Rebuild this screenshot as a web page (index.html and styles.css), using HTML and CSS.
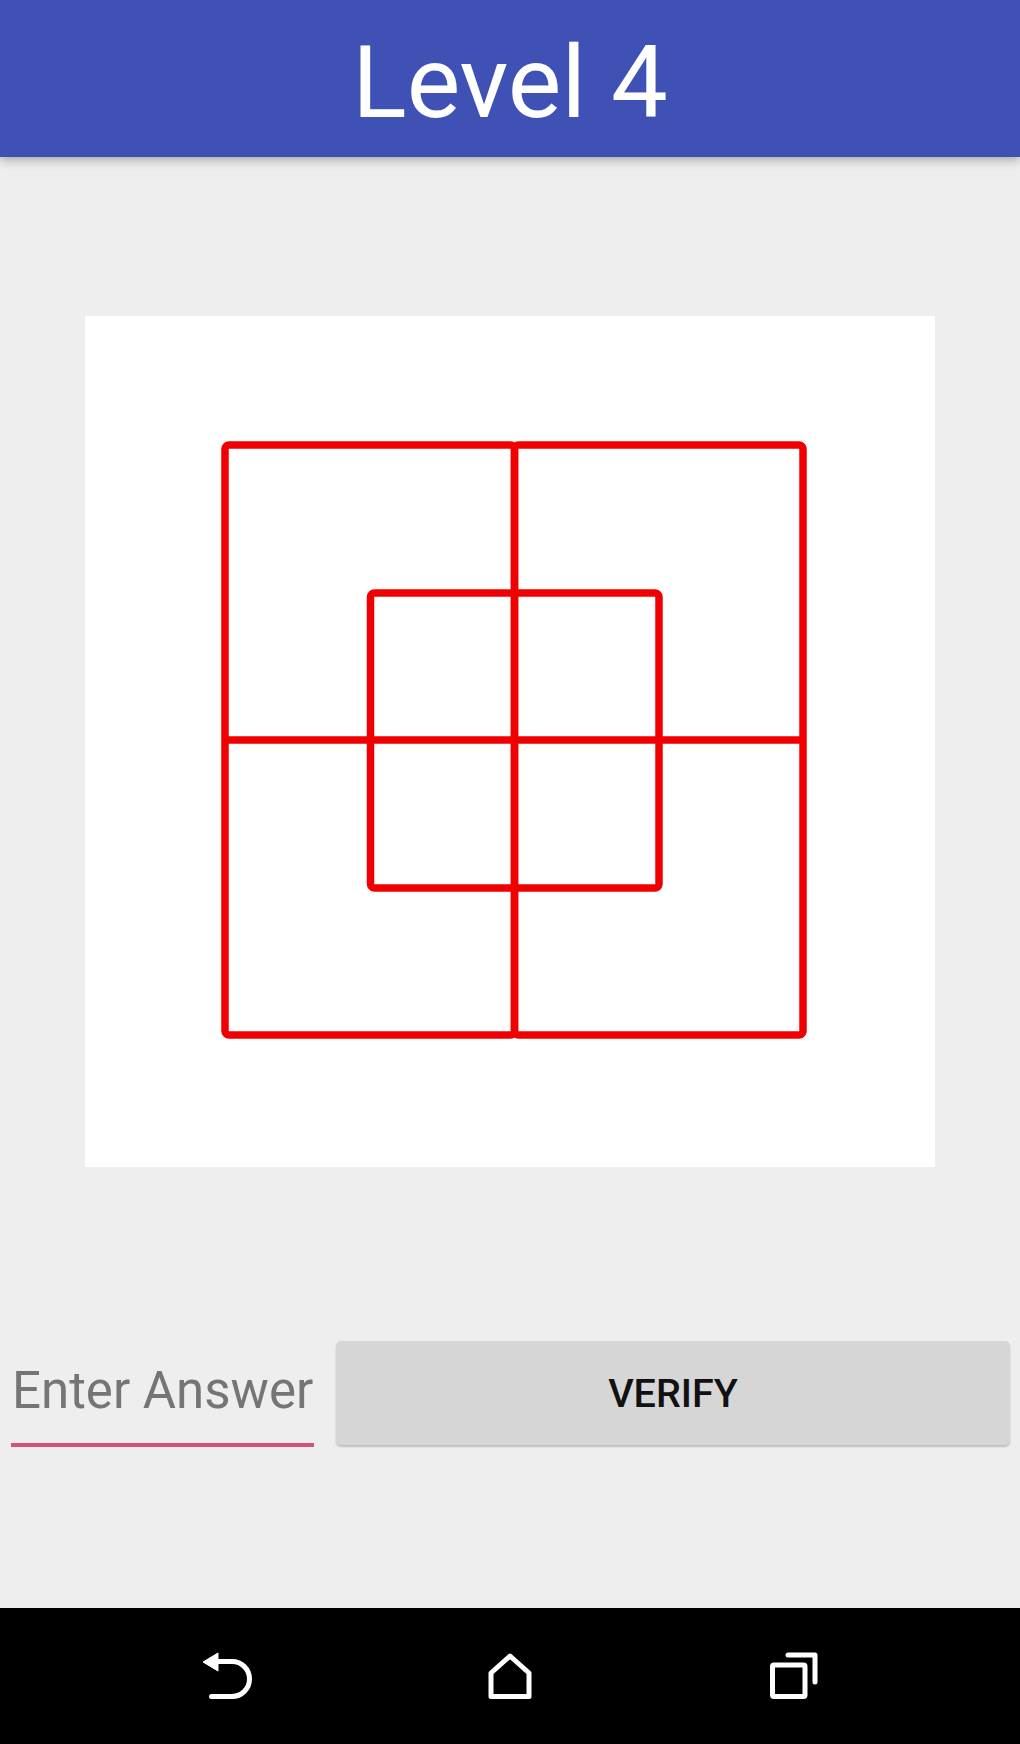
FILE: index.html
```html
<!DOCTYPE html>
<html lang="en">
<head>
  <meta charset="UTF-8" />
  <meta name="viewport" content="width=device-width, initial-scale=1" />
  <title>Level 4</title>
  <link rel="stylesheet" href="styles.css">
</head>
<body>
  <header class="app-bar">Level 4</header>

  <main class="content">
    <div class="puzzle">
      <svg class="puzzle-figure" viewBox="0 0 850 851" width="850" height="851" aria-label="Squares puzzle">
        <g fill="none" stroke="#f00000" stroke-width="7.5" stroke-linejoin="round">
          <!-- outer square, split in two -->
          <rect x="140" y="129" width="289.5" height="590" rx="4" />
          <rect x="429.5" y="129" width="288.5" height="590" rx="4" />
          <!-- inner square -->
          <rect x="285.5" y="277" width="288.5" height="295" rx="4" />
          <!-- cross line -->
          <path d="M140 424 H718" />
        </g>
      </svg>
    </div>

    <div class="answer-row">
      <div class="answer-field">Enter Answer</div>
      <button class="verify-btn">VERIFY</button>
    </div>
  </main>

  <nav class="nav-bar">
    <svg class="nav-icon" viewBox="0 0 60 60" width="60" height="60">
      <path class="icon-fill" d="M3 17 L18 8 V26 Z" />
      <path class="icon-line" d="M18 16.5 H32 A17.5 17.5 0 0 1 32 51.5 H11.5" />
    </svg>
    <svg class="nav-icon" viewBox="0 0 60 60" width="60" height="60">
      <path class="icon-line" d="M30 11 L11 28 V51.5 H49 V28 Z" />
    </svg>
    <svg class="nav-icon" viewBox="0 0 60 60" width="60" height="60">
      <rect class="icon-line" x="12.5" y="20" width="32.5" height="31.5" rx="1.5" />
      <path class="icon-line" d="M28 10 H55 V37" />
    </svg>
  </nav>
</body>
</html>
```

FILE: styles.css
```css
body {
  margin: 0;
  height: 1744px;
  display: flex;
  flex-direction: column;
  background-color: #eeeeee;
  font-family: Roboto, sans-serif;
  overflow: hidden;
}

.app-bar {
  height: 157px;
  line-height: 165px;
  flex-shrink: 0;
  text-align: center;
  font-size: 101px;
  color: white;
  background-color: #3f51b5;
  box-shadow: 0 3px 10px rgba(0,0,0,0.3);
  position: relative;
}

.content {
  flex: 1;
  padding-top: 159px;
}

.puzzle {
  width: 850px;
  height: 851px;
  margin-left: 85px;
  background-color: white;
}

.puzzle-figure {
  display: block;
}

.answer-row {
  display: flex;
  align-items: flex-start;
  gap: 22px;
  margin-top: 174px;
  padding-left: 11px;
}

.answer-field {
  width: 303px;
  height: 106px;
  box-sizing: border-box;
  padding: 20px 0 0 1px;
  font-size: 51px;
  line-height: 60px;
  color: #757575;
  border-bottom: 4px solid #d6517f;
  white-space: nowrap;
}

.verify-btn {
  width: 674px;
  height: 104px;
  padding: 0;
  border: none;
  border-radius: 5px;
  background-color: #d6d6d6;
  box-shadow: 0 2px 2px rgba(0,0,0,0.2);
  font-family: Roboto, sans-serif;
  font-size: 39.5px;
  font-weight: 500;
  color: #111;
}

.nav-bar {
  height: 136px;
  flex-shrink: 0;
  box-sizing: border-box;
  display: flex;
  gap: 220px;
  padding: 37px 0 0 200px;
  background-color: black;
}

.nav-icon {
  display: block;
}

.icon-line {
  fill: none;
  stroke: white;
  stroke-width: 5;
  stroke-linecap: round;
  stroke-linejoin: round;
}

.icon-fill {
  fill: white;
  stroke: white;
  stroke-width: 1;
  stroke-linejoin: round;
}
```
